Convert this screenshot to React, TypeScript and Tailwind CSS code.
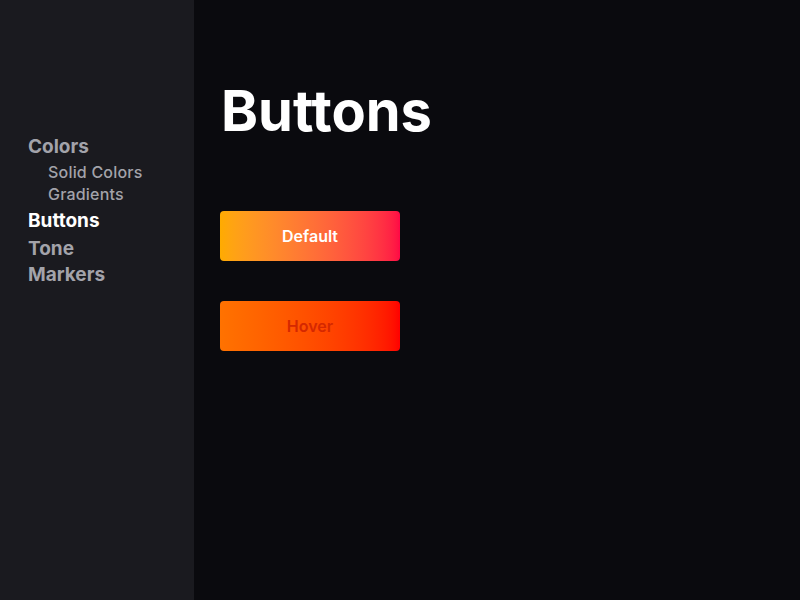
import React from "react";

export default function App() {
  const font = { fontFamily: "Inter, Lato, sans-serif" };
  return (
    <div className="flex w-[800px] h-[600px] bg-[#0a0a0e]" style={font}>
      <aside className="w-[194px] h-full bg-[#1a1a1f] pt-[134px] pl-[28px]">
        <nav className="flex flex-col">
          <a className="text-[19px] leading-[26px] font-bold text-[#a3a3aa]">Colors</a>
          <a className="mt-[1px] pl-[20px] text-[16px] leading-[22px] font-medium text-[#a3a3aa] tracking-[0.2px]">Solid Colors</a>
          <a className="pl-[20px] text-[16px] leading-[22px] font-medium text-[#a3a3aa] tracking-[0.2px]">Gradients</a>
          <a className="mt-[3px] text-[19px] leading-[26px] font-bold text-white">Buttons</a>
          <a className="mt-[2px] text-[19px] leading-[26px] font-bold text-[#a3a3aa]">Tone</a>
          <a className="text-[19px] leading-[26px] font-bold text-[#a3a3aa]">Markers</a>
        </nav>
      </aside>
      <main className="flex-1 pl-[26px] pt-[76px]">
        <h1 className="ml-[1px] text-[56px] leading-[70px] font-bold text-white">Buttons</h1>
        <div className="mt-[65px] flex flex-col gap-[40px]">
          <button className="w-[180px] h-[50px] rounded-[4px] bg-gradient-to-r from-[#ffab00] to-[#ff0745] text-white text-[16px] font-semibold">
            Default
          </button>
          <button className="w-[180px] h-[50px] rounded-[4px] bg-gradient-to-r from-[#ff7200] to-[#ff0000] text-[#d52800] text-[16px] font-semibold">
            Hover
          </button>
        </div>
      </main>
    </div>
  );
}
